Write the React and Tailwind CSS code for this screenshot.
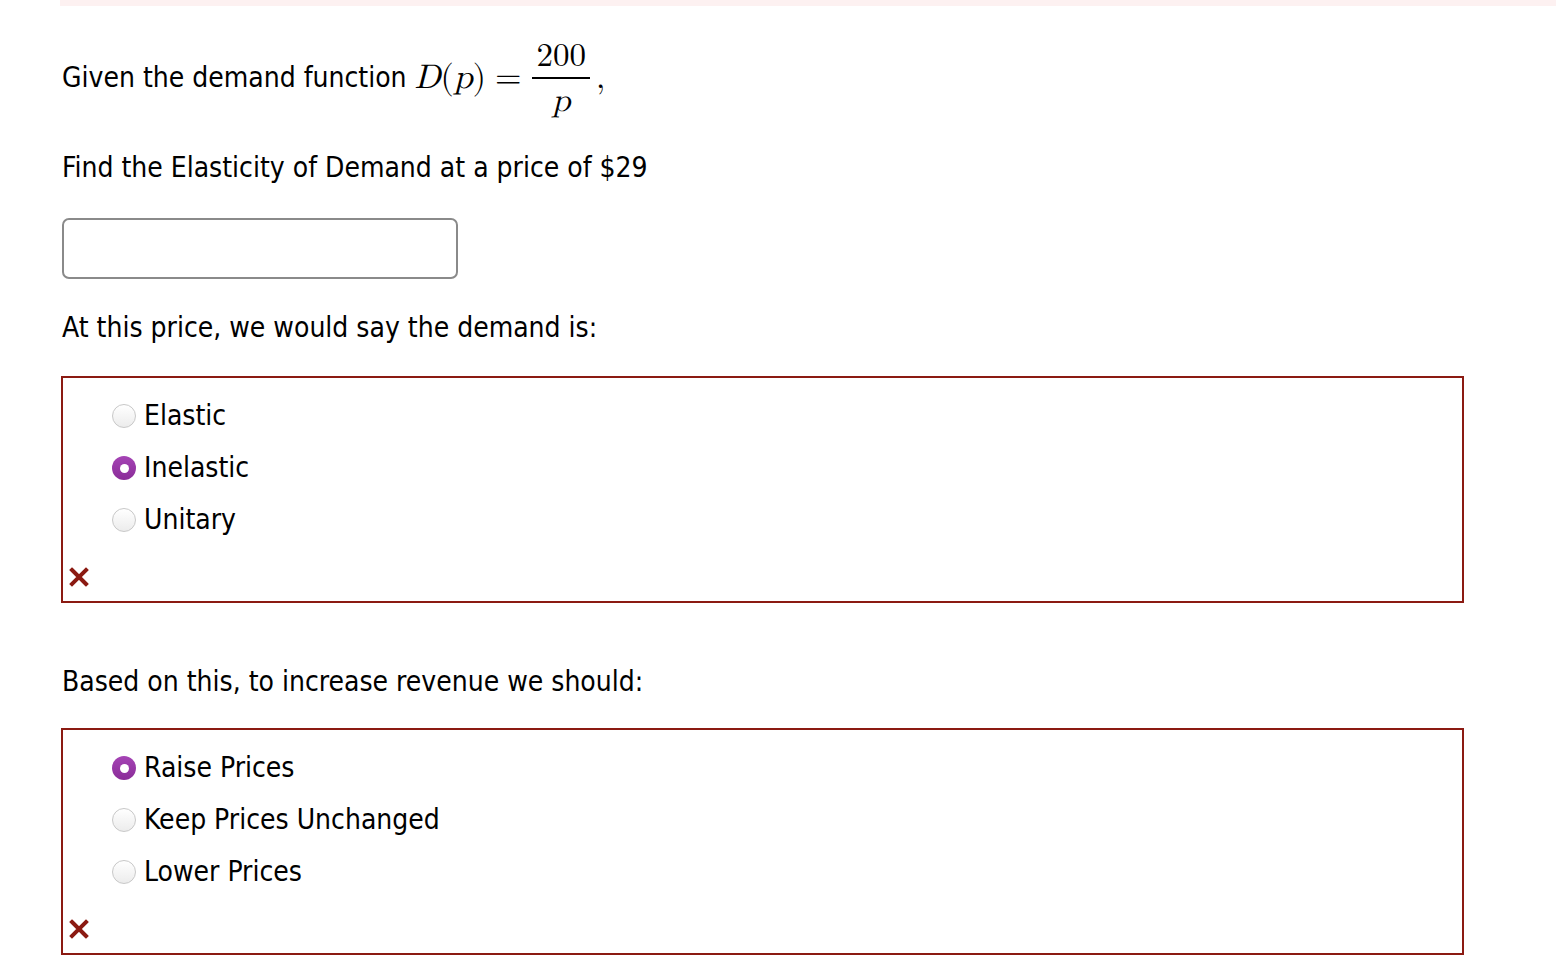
import React from 'react';

const Radio = ({ checked }) =>
  checked ? (
    <span className="w-[24px] h-[24px] rounded-full bg-gradient-to-b from-[#a544b5] to-[#8a2c98] flex items-center justify-center shrink-0">
      <span className="w-[9px] h-[9px] rounded-full bg-white" />
    </span>
  ) : (
    <span className="w-[24px] h-[24px] rounded-full border border-[#c8c8c8] bg-gradient-to-b from-[#ffffff] to-[#ececec] shrink-0" />
  );

const ChoiceBox = ({ options, selected }) => (
  <div className="border-2 border-[#8b1a12] w-[1403px] h-[227px] relative">
    <div className="flex flex-col gap-[18px] pl-[49px] pt-[21px]">
      {options.map((opt) => (
        <label key={opt} className="flex items-center gap-[8px] h-[34px]">
          <Radio checked={opt === selected} />
          <span>{opt}</span>
        </label>
      ))}
    </div>
    <svg className="absolute left-[6px] bottom-[14px]" width="20" height="20" viewBox="0 0 20 20">
      <path d="M3 3 L17 17 M17 3 L3 17" stroke="#8b1a12" strokeWidth="4" strokeLinecap="square" />
    </svg>
  </div>
);

export default function App() {
  return (
    <div className="bg-white min-h-screen text-black text-[28px]" style={{ fontFamily: '"DejaVu Sans Condensed", "Lato", sans-serif' }}>
      <div className="ml-[60px] h-[6px] bg-[#fdf1f1]" />
      <div className="pl-[62px]">
        <div className="flex items-center h-[142px] pt-[2px]">
          <span>Given the demand function</span>
          <span className="flex items-center ml-[8px]" style={{ fontFamily: '"Latin Modern Math", "DejaVu Serif", "Liberation Serif", serif' }}>
            <span className="italic text-[34px]">D</span>
            <span className="text-[34px]">(</span>
            <span className="italic text-[34px]">p</span>
            <span className="text-[34px]">)</span>
            <span className="text-[34px] mx-[9px]">=</span>
            <span className="inline-flex flex-col items-center mx-[2px]">
              <span className="text-[33px] leading-[42px] px-[4px] pt-[2px]">200</span>
              <span className="h-[2px] w-full bg-black" />
              <span className="italic text-[33px] leading-[44px]">p</span>
            </span>
            <span className="text-[33px] ml-[4px]">,</span>
          </span>
        </div>
        <div className="h-[40px] flex items-center">Find the Elasticity of Demand at a price of $29</div>
        <div className="h-[30px]" />
        <input className="block w-[396px] h-[61px] border-2 border-[#8a8a8a] rounded-[7px] outline-none px-3" />
        <div className="h-[97px] flex items-center">At this price, we would say the demand is:</div>
        <div className="-ml-[1px]">
          <ChoiceBox options={['Elastic', 'Inelastic', 'Unitary']} selected="Inelastic" />
        </div>
        <div className="h-[125px] flex items-center pt-[33px]">Based on this, to increase revenue we should:</div>
        <div className="-ml-[1px]">
          <ChoiceBox options={['Raise Prices', 'Keep Prices Unchanged', 'Lower Prices']} selected="Raise Prices" />
        </div>
      </div>
    </div>
  );
}
